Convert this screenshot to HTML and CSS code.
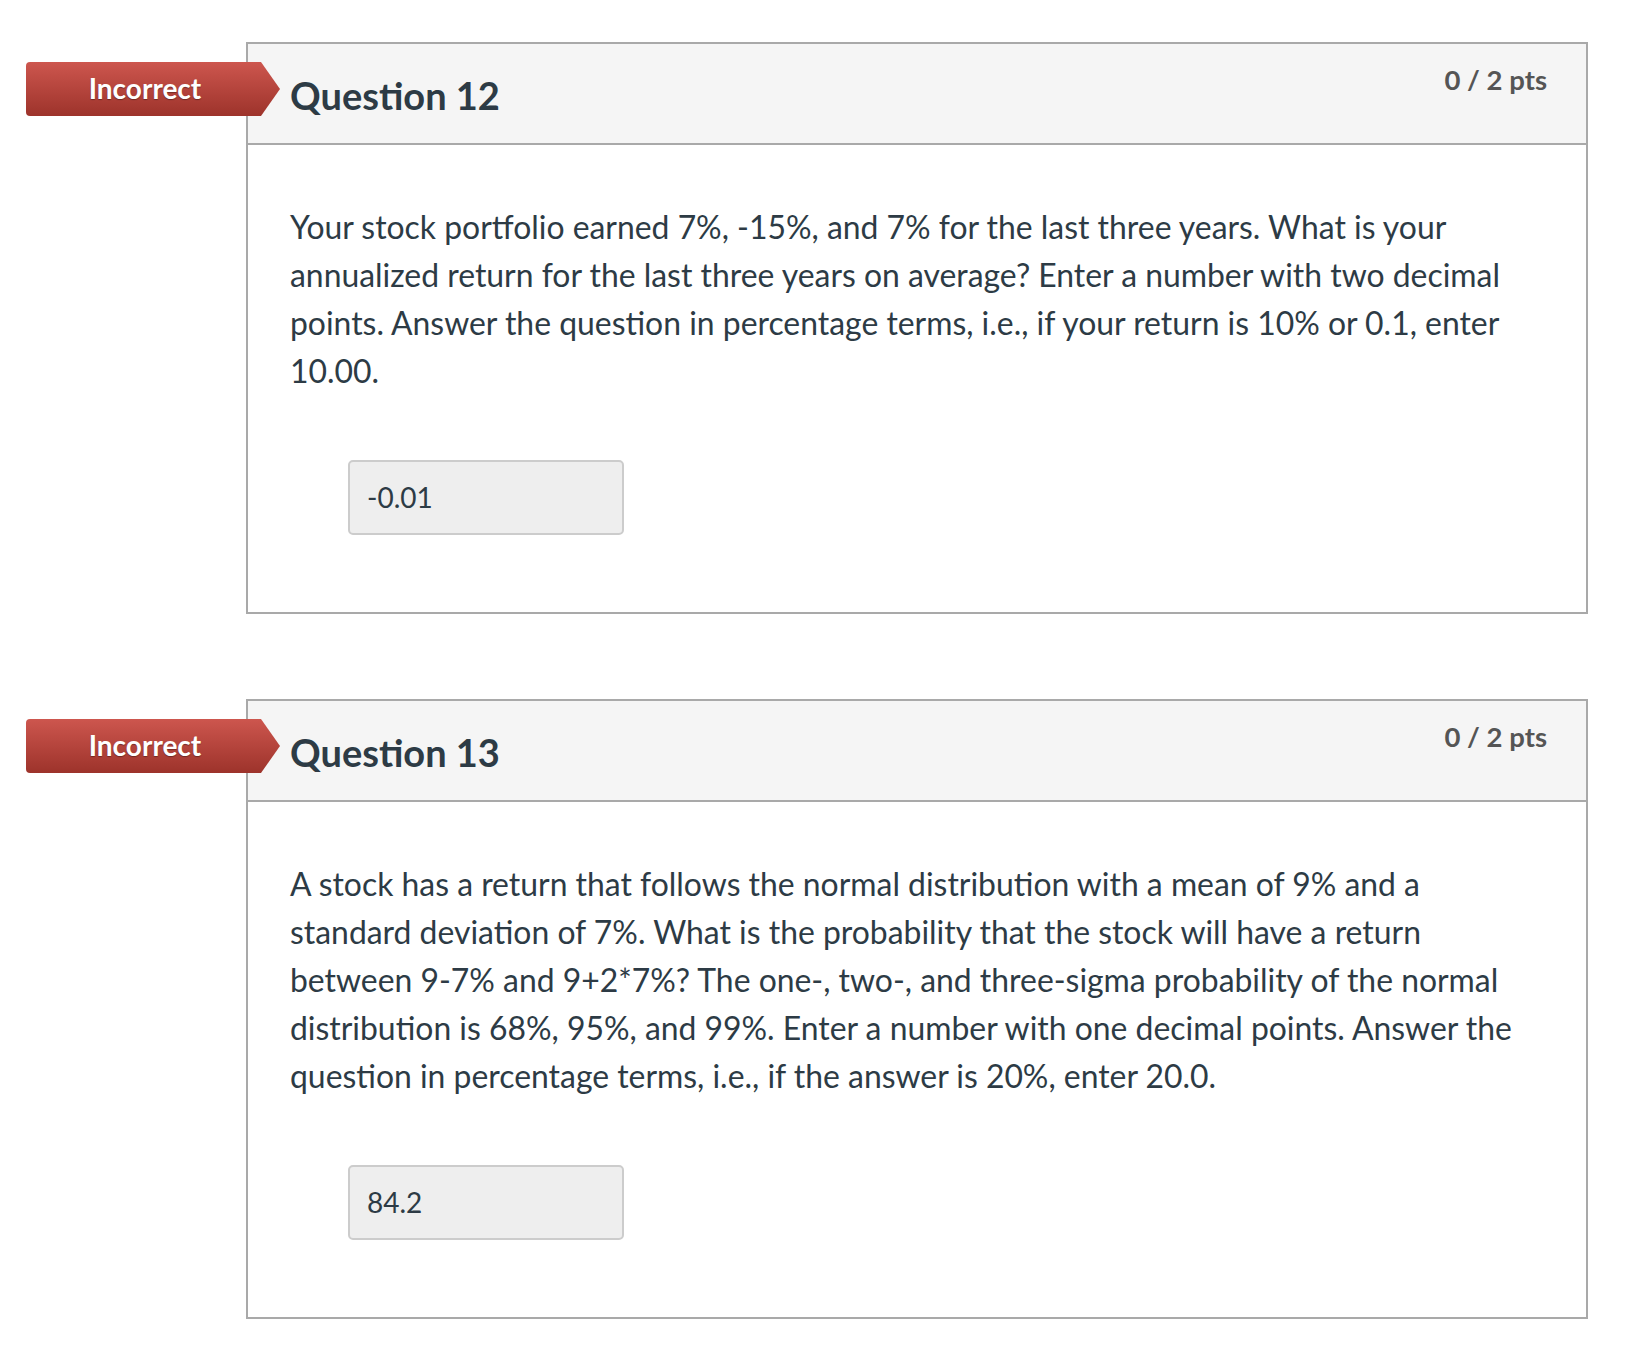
FILE: index.html
```html
<!DOCTYPE html>
<html lang="en">
<head>
<meta charset="utf-8">
<title>Quiz results</title>
<link rel="stylesheet" href="styles.css">
</head>
<body>
<div class="page">
  <div class="question">
    <div class="badge"><span class="badge-text">Incorrect</span><svg class="badge-tip" width="22" height="54" viewBox="0 0 22 54" aria-hidden="true"><defs><linearGradient id="g1" x1="0" y1="0" x2="0" y2="1"><stop offset="0" stop-color="#cd564e"/><stop offset="1" stop-color="#9d332b"/></linearGradient></defs><polygon points="0,0 2,0 21,27 2,54 0,54" fill="url(#g1)"/></svg></div>
    <div class="card">
      <div class="card-header">
        <h2 class="title">Question 12</h2>
        <span class="pts">0 / 2 pts</span>
      </div>
      <div class="card-body">
        <p class="text">Your stock portfolio earned 7%, -15%, and 7% for the last three years. What is your annualized return for the last three years on average? Enter a number with two decimal points. Answer the question in percentage terms, i.e., if your return is 10% or 0.1, enter 10.00.</p>
        <div class="answer">-0.01</div>
      </div>
    </div>
  </div>
  <div class="question">
    <div class="badge"><span class="badge-text">Incorrect</span><svg class="badge-tip" width="22" height="54" viewBox="0 0 22 54" aria-hidden="true"><defs><linearGradient id="g2" x1="0" y1="0" x2="0" y2="1"><stop offset="0" stop-color="#cd564e"/><stop offset="1" stop-color="#9d332b"/></linearGradient></defs><polygon points="0,0 2,0 21,27 2,54 0,54" fill="url(#g2)"/></svg></div>
    <div class="card">
      <div class="card-header">
        <h2 class="title">Question 13</h2>
        <span class="pts">0 / 2 pts</span>
      </div>
      <div class="card-body">
        <p class="text">A stock has a return that follows the normal distribution with a mean of 9% and a standard deviation of 7%. What is the probability that the stock will have a return between 9-7% and 9+2*7%? The one-, two-, and three-sigma probability of the normal distribution is 68%, 95%, and 99%. Enter a number with one decimal points. Answer the question in percentage terms, i.e., if the answer is 20%, enter 20.0.</p>
        <div class="answer">84.2</div>
      </div>
    </div>
  </div>
</div>
</body>
</html>
```

FILE: styles.css
```css
html, body {
  margin: 0;
  padding: 0;
  background: #ffffff;
}

body {
  font-family: Lato, "Noto Sans", "Liberation Sans", sans-serif;
  color: #2d3b45;
}

.page {
  padding: 42px 42px 34px 246px;
  display: flex;
  flex-direction: column;
  gap: 85px;
}

.question {
  position: relative;
}

.badge {
  position: absolute;
  left: -220px;
  top: 20px;
  display: flex;
  height: 54px;
}

.badge-text {
  width: 233px;
  height: 54px;
  box-sizing: border-box;
  padding-left: 5px;
  border-radius: 4px 0 0 4px;
  background: linear-gradient(#cd564e, #9d332b);
  color: #ffffff;
  font-weight: 700;
  font-size: 28px;
  line-height: 52px;
  text-align: center;
  text-shadow: 0 1px 1px rgba(0, 0, 0, 0.35);
}

.badge-tip {
  display: block;
}

.card {
  border: 2px solid #a9a9a9;
}

.card-header {
  height: 101px;
  box-sizing: border-box;
  background: #f5f5f5;
  border-bottom: 2px solid #a9a9a9;
  display: flex;
  justify-content: space-between;
  align-items: flex-start;
  padding: 0 39px 0 42px;
}

.title {
  margin: 0;
  padding-top: 27px;
  font-size: 38px;
  line-height: 48px;
  font-weight: 700;
  color: #2d3b45;
}

.pts {
  padding-top: 18px;
  font-size: 27.5px;
  line-height: 36px;
  font-weight: 700;
  color: #555555;
}

.card-body {
  padding: 58px 42px 77px 42px;
}

.text {
  margin: 0;
  font-size: 31.9px;
  line-height: 48px;
}

.answer {
  margin: 65px 0 0 58px;
  width: 276px;
  height: 75px;
  box-sizing: border-box;
  background: #eeeeee;
  border: 2px solid #cccccc;
  border-radius: 5px;
  padding-left: 17px;
  font-size: 28px;
  line-height: 70px;
  color: #2d3b45;
}
```
